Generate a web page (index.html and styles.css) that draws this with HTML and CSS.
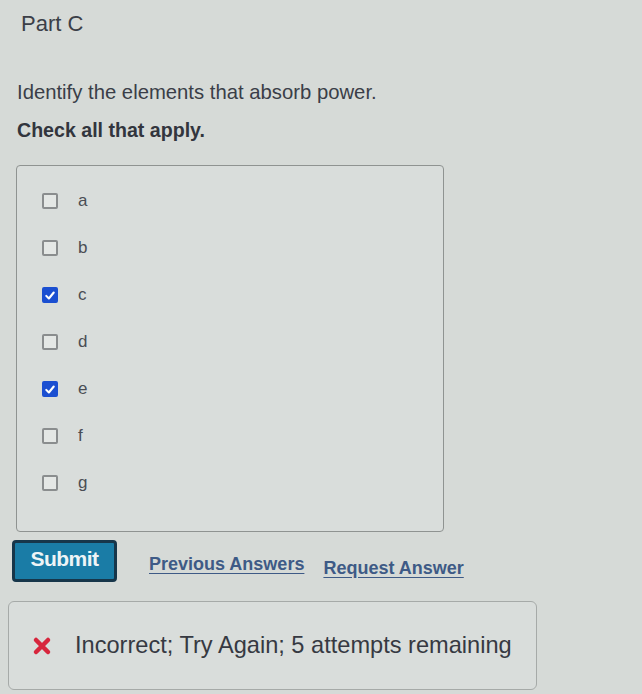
FILE: index.html
```html
<!DOCTYPE html>
<html>
<head>
<meta charset="utf-8">
<link rel="stylesheet" href="styles.css">
</head>
<body>
<div class="page">
  <h2 class="part">Part C</h2>
  <p class="prompt">Identify the elements that absorb power.</p>
  <p class="instr">Check all that apply.</p>
  <div class="choices">
    <label class="opt"><span class="box"></span><span class="lbl">a</span></label>
    <label class="opt"><span class="box"></span><span class="lbl">b</span></label>
    <label class="opt"><span class="box on"><svg viewBox="0 0 16 16" width="13" height="13"><path d="M3 8.5 L6.5 12 L13 4" fill="none" stroke="#fff" stroke-width="2.8" stroke-linecap="round" stroke-linejoin="round"/></svg></span><span class="lbl">c</span></label>
    <label class="opt"><span class="box"></span><span class="lbl">d</span></label>
    <label class="opt"><span class="box on"><svg viewBox="0 0 16 16" width="13" height="13"><path d="M3 8.5 L6.5 12 L13 4" fill="none" stroke="#fff" stroke-width="2.8" stroke-linecap="round" stroke-linejoin="round"/></svg></span><span class="lbl">e</span></label>
    <label class="opt"><span class="box"></span><span class="lbl">f</span></label>
    <label class="opt"><span class="box"></span><span class="lbl">g</span></label>
  </div>
  <div class="actions">
    <button class="submit">Submit</button>
    <a class="link">Previous Answers</a>
    <a class="link req">Request Answer</a>
  </div>
  <div class="feedback">
    <svg class="xicon" viewBox="0 0 20 20" width="20" height="20"><path d="M4 4 L16 16 M16 4 L4 16" stroke="#d7263d" stroke-width="4.5" stroke-linecap="round"/></svg>
    <span class="fbtext">Incorrect; Try Again; 5 attempts remaining</span>
  </div>
</div>
</body>
</html>
```

FILE: styles.css
```css
html, body {
  margin: 0;
  padding: 0;
  background: #d6dad7;
}
body {
  font-family: "Liberation Sans", Arial, sans-serif;
  color: #3a3d44;
}
.page {
  width: 642px;
  height: 694px;
  padding: 10px 0 0 0;
  box-sizing: border-box;
}
.part {
  margin: 0 0 0 21px;
  font-size: 22px;
  font-weight: normal;
  line-height: 28px;
  color: #3c3f48;
}
.prompt {
  margin: 42px 0 0 17px;
  font-size: 20.3px;
  line-height: 24px;
  color: #3a3e48;
}
.instr {
  margin: 14px 0 0 17px;
  font-size: 19.6px;
  line-height: 24px;
  color: #32353d;
  font-weight: bold;
}
.choices {
  margin: 23px 0 0 16px;
  width: 428px;
  height: 367px;
  box-sizing: border-box;
  border: 1px solid #8f9391;
  border-radius: 4px;
  background: #d9dddb;
  padding: 26px 0 0 25px;
  display: flex;
  flex-direction: column;
  gap: 29px;
}
.opt {
  display: flex;
  align-items: center;
  height: 18px;
}
.box {
  width: 12px;
  height: 12px;
  border: 2px solid #8a8d8e;
  border-radius: 2px;
  background: #e4e7e5;
  display: flex;
  align-items: center;
  justify-content: center;
}
.box.on {
  background: #1b4fd1;
  border-color: #1b4fd1;
}
.lbl {
  margin-left: 20px;
  font-size: 17px;
  color: #4a4d54;
}
.actions {
  margin: 8px 0 0 12px;
  display: flex;
  align-items: center;
}
.submit {
  width: 105px;
  height: 42px;
  background: #1a7ca6;
  border: 3px solid #17364a;
  border-radius: 4px;
  color: #eef4f6;
  font-family: "Liberation Sans", Arial, sans-serif;
  font-size: 21px;
  font-weight: bold;
  letter-spacing: -0.5px;
  padding: 0 0 4px 0;
}
.link {
  font-size: 18px;
  font-weight: bold;
  color: #3e5a86;
  text-decoration: underline;
  text-underline-offset: 3px;
  margin-left: 32px;
  margin-top: 6px;
}
.link.req {
  margin-left: 19px;
  margin-top: 14px;
}
.feedback {
  margin: 19px 0 0 8px;
  width: 529px;
  height: 89px;
  box-sizing: border-box;
  border: 1px solid #a6aaa8;
  border-radius: 6px;
  background: #d9dddb;
  display: flex;
  align-items: center;
  padding: 0 0 0 23px;
}
.xicon {
  flex: none;
}
.fbtext {
  margin-left: 23px;
  font-size: 23.6px;
  color: #363942;
}
```
